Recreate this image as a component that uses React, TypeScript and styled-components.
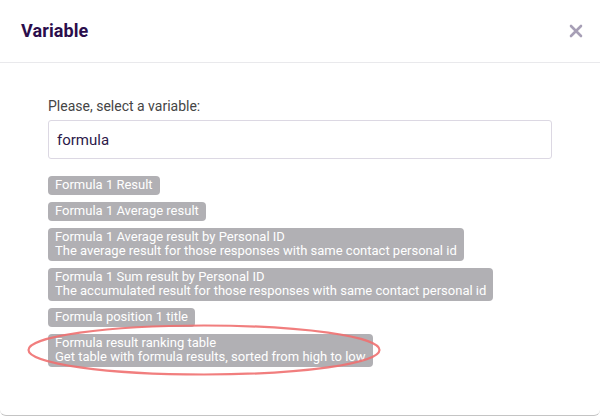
import React from 'react';
import styled, { createGlobalStyle } from 'styled-components';

interface VariableOption {
  name: string;
  description?: string;
}

const GlobalStyle = createGlobalStyle`
  html, body {
    margin: 0;
    padding: 0;
    background: #ffffff;
  }
  body {
    font-family: Roboto, "Liberation Sans", Arial, sans-serif;
  }
`;

const Modal = styled.div`
  width: 600px;
  height: 416px;
  box-sizing: border-box;
  background: #ffffff;
  border-bottom: 1px solid #c4c4c4;
  border-radius: 0 0 6px 6px;
  display: flex;
  flex-direction: column;
  overflow: hidden;
`;

const Header = styled.div`
  height: 62px;
  flex-shrink: 0;
  display: flex;
  align-items: center;
  justify-content: space-between;
  padding: 0 14px 0 21px;
  border-bottom: 1px solid #e9e9ec;
`;

const ModalTitle = styled.h2`
  margin: 0 0 2px 0;
  font-size: 18px;
  font-weight: 700;
  color: #2b0e4c;
  letter-spacing: 0.1px;
`;

const CloseButton = styled.button`
  width: 20px;
  height: 20px;
  padding: 0;
  border: none;
  background: transparent;
  display: flex;
  align-items: center;
  justify-content: center;
  cursor: pointer;
`;

const Body = styled.div`
  position: relative;
  padding: 35px 48px 0 48px;
  display: flex;
  flex-direction: column;
`;

const Label = styled.label`
  font-size: 14px;
  line-height: 16px;
  color: #454545;
  margin-bottom: 6px;
`;

const SearchInput = styled.input`
  width: 504px;
  height: 39px;
  box-sizing: border-box;
  border: 1px solid #dcd8e3;
  border-radius: 3px;
  padding: 0 8px;
  font-family: inherit;
  font-size: 15px;
  color: #2c1a4a;
  outline: none;
  margin-bottom: 17px;
`;

const OptionList = styled.div`
  position: relative;
  display: flex;
  flex-direction: column;
  align-items: flex-start;
  gap: 7px;
`;

const OptionTag = styled.div`
  background: #b1b0b4;
  color: #ffffff;
  border-radius: 4px;
  padding: 2px 7px 3px 7px;
  font-size: 13px;
  line-height: 14px;
  white-space: nowrap;
`;

const Highlight = styled.svg`
  position: absolute;
  left: -22px;
  bottom: -10px;
  pointer-events: none;
`;

const options: VariableOption[] = [
  { name: 'Formula 1 Result' },
  { name: 'Formula 1 Average result' },
  {
    name: 'Formula 1 Average result by Personal ID',
    description: 'The average result for those responses with same contact personal id',
  },
  {
    name: 'Formula 1 Sum result by Personal ID',
    description: 'The accumulated result for those responses with same contact personal id',
  },
  { name: 'Formula position 1 title' },
  {
    name: 'Formula result ranking table',
    description: 'Get table with formula results, sorted from high to low',
  },
];

const App: React.FC = () => {
  return (
    <>
      <GlobalStyle />
      <Modal>
        <Header>
          <ModalTitle>Variable</ModalTitle>
          <CloseButton aria-label="Close">
            <svg width="14" height="14" viewBox="0 0 14 14">
              <path d="M2 2 L12 12 M12 2 L2 12" stroke="#a79fb6" strokeWidth="2.6" strokeLinecap="round" />
            </svg>
          </CloseButton>
        </Header>
        <Body>
          <Label>Please, select a variable:</Label>
          <SearchInput defaultValue="formula" />
          <OptionList>
            {options.map((option) => (
              <OptionTag key={option.name}>
                {option.name}
                {option.description && (
                  <>
                    <br />
                    {option.description}
                  </>
                )}
              </OptionTag>
            ))}
            {/* annotation round the last item */}
            <Highlight width="356" height="54" viewBox="0 0 356 54">
              <ellipse cx="178" cy="27" rx="175.5" ry="24.5" fill="none" stroke="#f07070" strokeOpacity="0.9" strokeWidth="2.2" />
            </Highlight>
          </OptionList>
        </Body>
      </Modal>
    </>
  );
};

export default App;
